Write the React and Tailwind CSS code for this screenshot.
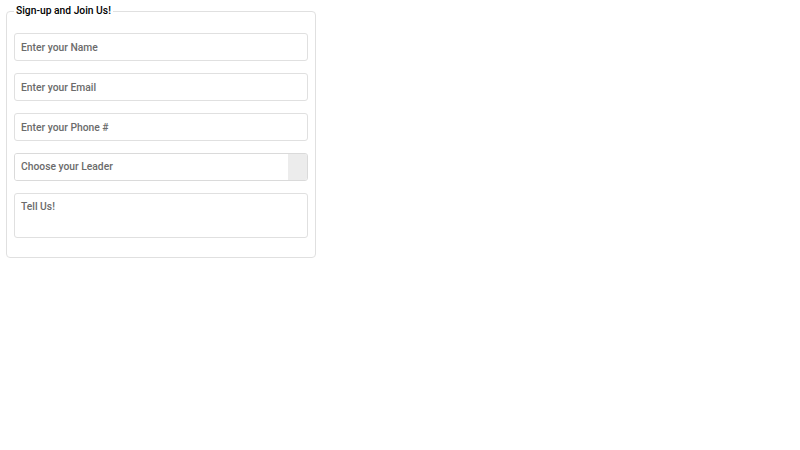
export default function App() {
  const inputClass =
    "h-[28px] w-full rounded-[3px] border border-[#e0e0e0] bg-white px-[6px] text-[10.3px] font-medium text-[#555] placeholder:text-[#6b6b6b] outline-none";

  return (
    <div className="bg-white pl-[6px] pt-[4px] font-['Roboto',sans-serif]">
      <fieldset className="w-[310px] rounded-[4px] border border-[#e0e0e0] px-[7px] pb-[19px] pt-[15px]">
        <legend className="px-[2px] text-[10.3px] font-medium leading-[14px] text-black">Sign-up and Join Us!</legend>
        <div className="flex flex-col gap-[12px]">
          <input className={inputClass} placeholder="Enter your Name" />
          <input className={inputClass} placeholder="Enter your Email" />
          <input className={inputClass} placeholder="Enter your Phone #" />
          <div className="flex h-[28px] w-full overflow-hidden rounded-[3px] border border-[#dadada] shadow-[inset_0_1px_2px_rgba(0,0,0,0.08)]">
            <div className="flex flex-1 items-center bg-white px-[6px] text-[10.3px] font-medium text-[#6b6b6b]">Choose your Leader</div>
            <div className="w-[19px] bg-[#ececec]"></div>
          </div>
          <textarea
            className="h-[45px] w-full resize-none rounded-[3px] border border-[#e0e0e0] bg-white px-[6px] py-[6px] text-[10.3px] font-medium leading-[14px] text-[#555] placeholder:text-[#6b6b6b] outline-none"
            placeholder="Tell Us!"
          />
        </div>
      </fieldset>
    </div>
  );
}
